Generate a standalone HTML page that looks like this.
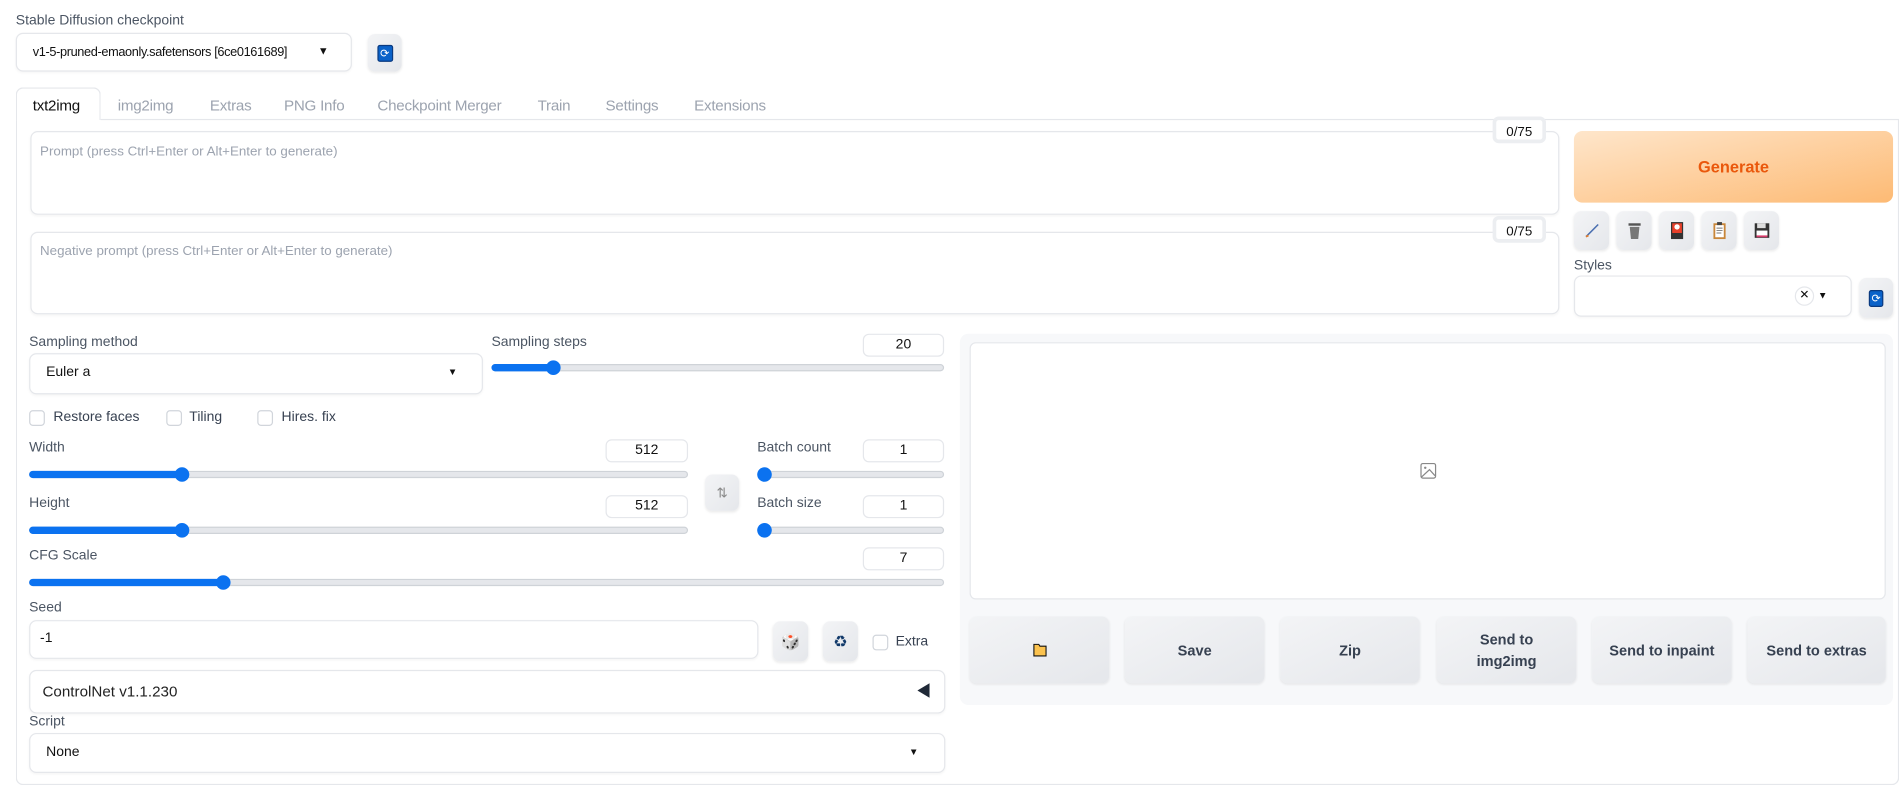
<!DOCTYPE html>
<html><head><meta charset="utf-8">
<style>
*{box-sizing:border-box;margin:0;padding:0}
html,body{width:1899px;height:785px;overflow:hidden;background:#fff}
#root{position:absolute;left:0;top:0;width:1565px;height:647px;transform:scale(1.2135);transform-origin:0 0;font-family:"Liberation Sans",sans-serif;color:#374151}
.a{position:absolute}
.lbl{position:absolute;font-size:11.5px;color:#4b5563;white-space:nowrap}
.box{position:absolute;background:#fff;border:1px solid #e5e7eb;border-radius:6px;box-shadow:0 1px 2px rgba(0,0,0,.04)}
.num{position:absolute;background:#fff;border:1px solid #e5e7eb;border-radius:5px;font-size:11.5px;text-align:center;line-height:17px;color:#111}
.btn{position:absolute;border-radius:6px;background:linear-gradient(to bottom right,#f3f4f6,#e5e7eb);box-shadow:0 1px 2px rgba(0,0,0,.08);display:flex;align-items:center;justify-content:center}
.track{position:absolute;height:6px;border-radius:3px;background:#e5e7eb;border:1px solid #cfd3d8}
.fill{position:absolute;height:6px;border-radius:3px;background:#0b72f0}
.thumb{position:absolute;width:12px;height:12px;border-radius:50%;background:#0b72f0}
.cb{position:absolute;width:13px;height:13px;border:1px solid #d1d5db;border-radius:3px;background:#fff}
.tab{position:absolute;top:80px;font-size:12.5px;color:#9ca3af;letter-spacing:-.2px}
.ob{font-size:12px;font-weight:bold;color:#374151;text-align:center;line-height:18px}
</style></head><body><div id="root">

<div class="lbl" style="left:13px;top:11px">Stable Diffusion checkpoint</div>
<div class="box" style="left:13px;top:27px;width:277px;height:32px"></div>
<div class="a" style="left:27px;top:37px;font-size:10.5px;letter-spacing:-.3px;color:#111">v1-5-pruned-emaonly.safetensors [6ce0161689]</div>
<div class="a" style="left:262px;top:37px;font-size:9px;color:#111">▼</div>
<div class="btn" style="left:303px;top:28px;width:28px;height:31px"><div style="width:13px;height:14px;background:#0a62c9;border:1px solid #0a3a80;border-radius:2px;color:#fff;font-size:9px;line-height:12px;text-align:center">⟳</div></div>

<div class="a" style="left:13px;top:72px;width:70px;height:27px;border:1px solid #e5e7eb;border-bottom:none;border-radius:6px 6px 0 0;background:#fff;z-index:2"></div>
<div class="a" style="left:83px;top:98px;width:1482px;height:1px;background:#e5e7eb"></div>
<div class="a" style="left:13px;top:98px;width:1552px;height:549px;border:1px solid #e5e7eb;border-top:none;border-radius:0 0 6px 6px"></div>
<div class="tab" style="left:27px;color:#111;z-index:3">txt2img</div>
<div class="tab" style="left:97px">img2img</div>
<div class="tab" style="left:173px">Extras</div>
<div class="tab" style="left:234px">PNG Info</div>
<div class="tab" style="left:311px">Checkpoint Merger</div>
<div class="tab" style="left:443px">Train</div>
<div class="tab" style="left:499px">Settings</div>
<div class="tab" style="left:572px">Extensions</div>

<div class="box" style="left:25px;top:108px;width:1260px;height:69px"></div>
<div class="a" style="left:33px;top:119px;font-size:11px;color:#9ca3af">Prompt (press Ctrl+Enter or Alt+Enter to generate)</div>
<div class="num" style="left:1230px;top:96px;width:44px;height:22px;line-height:20px;border:3px solid #eceef1;font-size:11px">0/75</div>
<div class="box" style="left:25px;top:191px;width:1260px;height:68px"></div>
<div class="a" style="left:33px;top:201px;font-size:11px;color:#9ca3af">Negative prompt (press Ctrl+Enter or Alt+Enter to generate)</div>
<div class="num" style="left:1230px;top:178px;width:44px;height:22px;line-height:20px;border:3px solid #eceef1;font-size:11px">0/75</div>

<div class="a" style="left:1297px;top:108px;width:263px;height:59px;border-radius:7px;background:linear-gradient(to bottom right,#fee6cb,#fdba74);display:flex;align-items:center;justify-content:center;color:#ea580c;font-size:13.5px;font-weight:bold">Generate</div>
<div class="btn" style="left:1297px;top:174px;width:29px;height:32px"><svg width="14" height="14"><path d="M2 12L12 2" stroke="#4a6fb0" stroke-width="1.3"/><path d="M2 12l2-1" stroke="#e07a2a" stroke-width="1.5"/></svg></div>
<div class="btn" style="left:1332px;top:174px;width:29px;height:32px"><svg width="14" height="16"><rect x="2" y="2" width="10" height="2" fill="#555"/><path d="M3 5h8l-1 10H4z" fill="#777"/></svg></div>
<div class="btn" style="left:1367px;top:174px;width:29px;height:32px"><svg width="12" height="16"><rect x="1" y="1" width="10" height="14" fill="#333"/><rect x="2" y="2" width="8" height="8" fill="#e8402a"/><circle cx="6" cy="5" r="2.2" fill="#fff"/></svg></div>
<div class="btn" style="left:1402px;top:174px;width:29px;height:32px"><svg width="12" height="16"><rect x="1" y="2" width="10" height="13" fill="#c8863a"/><rect x="2.5" y="3.5" width="7" height="10" fill="#fff"/><rect x="4" y="1" width="4" height="2.5" fill="#444"/><path d="M3.5 6h5M3.5 8h5M3.5 10h4" stroke="#777" stroke-width=".8"/></svg></div>
<div class="btn" style="left:1437px;top:174px;width:29px;height:32px"><svg width="14" height="14"><rect x="1" y="1" width="12" height="12" fill="#333"/><rect x="3" y="1" width="7" height="4" fill="#ddd"/><rect x="2.5" y="7" width="9" height="5" fill="#fff"/><rect x="2.5" y="11" width="9" height="1.5" fill="#d63a6a"/></svg></div>

<div class="lbl" style="left:1297px;top:213px">Styles</div>
<div class="box" style="left:1297px;top:227px;width:229px;height:34px"></div>
<div class="a" style="left:1479px;top:236px;width:16px;height:16px;border:1px solid #e5e7eb;border-radius:50%;font-size:10px;line-height:14px;text-align:center;color:#111">✕</div>
<div class="a" style="left:1498px;top:239px;font-size:8px;color:#111">▼</div>
<div class="btn" style="left:1532px;top:229px;width:28px;height:33px"><div style="width:12px;height:14px;background:#0a62c9;border:1px solid #0a3a80;border-radius:2px;color:#fff;font-size:9px;line-height:12px;text-align:center">⟳</div></div>

<div class="lbl" style="left:24px;top:276px">Sampling method</div>
<div class="box" style="left:24px;top:291px;width:374px;height:34px"></div>
<div class="a" style="left:38px;top:301px;font-size:11.5px;color:#111">Euler a</div>
<div class="a" style="left:369px;top:302px;font-size:8px;color:#111">▼</div>
<div class="lbl" style="left:405px;top:276px">Sampling steps</div>
<div class="num" style="left:711px;top:275px;width:67px;height:19px">20</div>
<div class="track" style="left:405px;top:300px;width:373px"></div><div class="fill" style="left:405px;top:300px;width:51px"></div><div class="thumb" style="left:450px;top:297px"></div>

<div class="cb" style="left:24px;top:338px"></div><div class="lbl" style="left:44px;top:338px;color:#374151">Restore faces</div>
<div class="cb" style="left:137px;top:338px"></div><div class="lbl" style="left:156px;top:338px;color:#374151">Tiling</div>
<div class="cb" style="left:212px;top:338px"></div><div class="lbl" style="left:232px;top:338px;color:#374151">Hires. fix</div>

<div class="lbl" style="left:24px;top:363px">Width</div>
<div class="num" style="left:499px;top:362px;width:68px;height:19px">512</div>
<div class="track" style="left:24px;top:388px;width:543px"></div><div class="fill" style="left:24px;top:388px;width:126px"></div><div class="thumb" style="left:144px;top:385px"></div>
<div class="lbl" style="left:24px;top:409px">Height</div>
<div class="num" style="left:499px;top:408px;width:68px;height:19px">512</div>
<div class="track" style="left:24px;top:434px;width:543px"></div><div class="fill" style="left:24px;top:434px;width:126px"></div><div class="thumb" style="left:144px;top:431px"></div>
<div class="btn" style="left:581px;top:391px;width:28px;height:30px;font-size:11px;color:#888">⇅</div>
<div class="lbl" style="left:624px;top:363px">Batch count</div>
<div class="num" style="left:711px;top:362px;width:67px;height:19px">1</div>
<div class="track" style="left:624px;top:388px;width:154px"></div><div class="thumb" style="left:624px;top:385px"></div>
<div class="lbl" style="left:624px;top:409px">Batch size</div>
<div class="num" style="left:711px;top:408px;width:67px;height:19px">1</div>
<div class="track" style="left:624px;top:434px;width:154px"></div><div class="thumb" style="left:624px;top:431px"></div>

<div class="lbl" style="left:24px;top:452px">CFG Scale</div>
<div class="num" style="left:711px;top:451px;width:67px;height:19px">7</div>
<div class="track" style="left:24px;top:477px;width:754px"></div><div class="fill" style="left:24px;top:477px;width:160px"></div><div class="thumb" style="left:178px;top:474px"></div>

<div class="lbl" style="left:24px;top:495px">Seed</div>
<div class="box" style="left:24px;top:511px;width:601px;height:32px"></div>
<div class="a" style="left:33px;top:520px;font-size:11.5px;color:#111">-1</div>
<div class="btn" style="left:637px;top:512px;width:29px;height:33px;font-size:13px">🎲</div>
<div class="btn" style="left:678px;top:512px;width:29px;height:33px;font-size:13px;color:#123a6a">♻</div>
<div class="cb" style="left:719px;top:523px"></div><div class="lbl" style="left:738px;top:523px;color:#374151">Extra</div>

<div class="box" style="left:24px;top:552px;width:755px;height:36px"></div>
<div class="a" style="left:35px;top:563px;font-size:12.5px;color:#222">ControlNet v1.1.230</div>
<div class="a" style="left:756px;top:563px;width:0;height:0;border-top:6px solid transparent;border-bottom:6px solid transparent;border-right:10px solid #1f2937"></div>
<div class="lbl" style="left:24px;top:589px">Script</div>
<div class="box" style="left:24px;top:604px;width:755px;height:33px"></div>
<div class="a" style="left:38px;top:614px;font-size:11.5px;color:#111">None</div>
<div class="a" style="left:749px;top:615px;font-size:8px;color:#111">▼</div>

<div class="a" style="left:791px;top:275px;width:769px;height:306px;background:#f7f8fa;border-radius:7px"></div>
<div class="a" style="left:799px;top:282px;width:755px;height:212px;background:#fff;border:1px solid #e5e7eb;border-radius:5px"></div>
<svg class="a" style="left:1170px;top:381px" width="15" height="15"><rect x="1" y="1" width="12" height="12" rx="1.5" fill="none" stroke="#888" stroke-width="1"/><circle cx="4.5" cy="4.5" r="1" fill="#888"/><path d="M1.5 12L8 6l4.5 5" fill="none" stroke="#888"/></svg>
<div class="btn ob" style="left:799px;top:508px;width:115px;height:55px"><svg width="12" height="11"><path d="M1 1h4l1 1.5h5v8H1z" fill="#fbc24e" stroke="#111" stroke-width=".9"/></svg></div>
<div class="btn ob" style="left:927px;top:508px;width:115px;height:55px">Save</div>
<div class="btn ob" style="left:1055px;top:508px;width:115px;height:55px">Zip</div>
<div class="btn ob" style="left:1184px;top:508px;width:115px;height:55px">Send to<br>img2img</div>
<div class="btn ob" style="left:1312px;top:508px;width:115px;height:55px">Send to inpaint</div>
<div class="btn ob" style="left:1440px;top:508px;width:114px;height:55px">Send to extras</div>

</div></body></html>
